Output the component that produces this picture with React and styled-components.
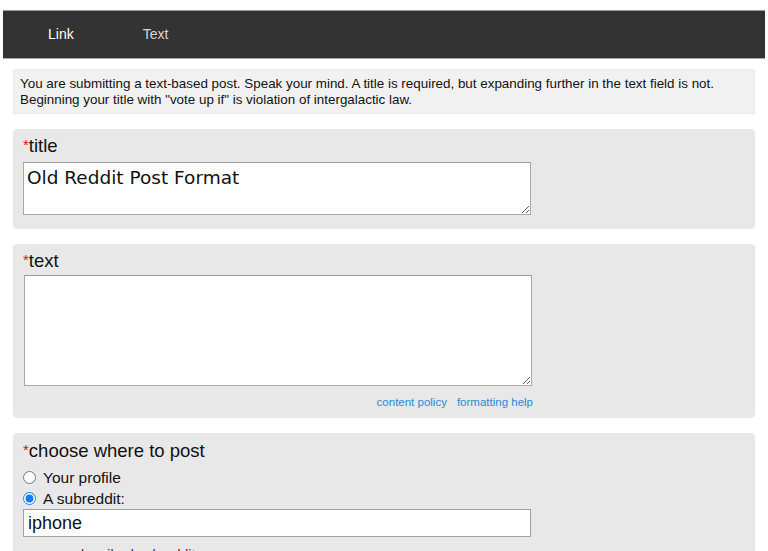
import React from "react";
import styled, { createGlobalStyle } from "styled-components";

const Global = createGlobalStyle`
  html, body { margin: 0; padding: 0; background: #fff; }
  body { font-family: "Liberation Sans", Arial, sans-serif; color: #222; overflow: hidden; }
`;

const Page = styled.div`
  padding: 10px 3px 0 3px;
  width: 762px;
`;

const TabBar = styled.nav`
  height: 47px;
  background: #333;
  border-top: 1px solid #9a9a9a;
  border-bottom: 1px solid #a8a8a8;
  display: flex;
  align-items: center;
  padding-left: 45px;
  gap: 69px;
`;

const Tab = styled.span`
  color: ${(p) => (p.$active ? "#fff" : "#d6d6d6")};
  font-size: 14px;
  padding-bottom: 1px;
`;

const Content = styled.div`
  margin-left: 10px;
  width: 742px;
  display: flex;
  flex-direction: column;
`;

const InfoBox = styled.div`
  margin-top: 10px;
  background: #f1f1f1;
  border: 1px solid #e9e9e9;
  padding: 6px 7px 5px 6px;
  font-size: 13.4px;
  line-height: 16px;
  color: #111;
`;

const Section = styled.section`
  margin-top: 15px;
  background: #e8e8e8;
  border-radius: 4px;
  padding: ${(p) => p.$pad || "6px 10px 14px 10px"};
  display: flex;
  flex-direction: column;
`;

const Label = styled.div`
  font-size: 18.5px;
  line-height: 20px;
  color: #111;
  margin-bottom: ${(p) => p.$mb || "6px"};
`;

const Star = styled.span`
  color: #f00;
  font-size: 15px;
  vertical-align: 2px;
`;

const TextArea = styled.textarea`
  box-sizing: border-box;
  width: ${(p) => p.$w || "508px"};
  height: ${(p) => p.$h};
  margin-left: ${(p) => p.$ml || "0"};
  border: 1px solid #a9a9a9;
  border-top-color: #9a9a9a;
  background: #fff;
  padding: 4px 4px 2px 3px;
  font-family: ${(p) => (p.$verdana ? '"DejaVu Sans", Verdana, sans-serif' : '"Liberation Sans", Arial, sans-serif')};
  font-size: 18.5px;
  color: #111;
  outline: none;
  resize: vertical;
  display: block;
`;

const LinkRow = styled.div`
  width: 509px;
  display: flex;
  justify-content: flex-end;
  gap: 10px;
  margin-top: 10px;
  padding-left: 1px;
`;

const SmallLink = styled.a`
  color: #2b8ad1;
  font-size: 11.5px;
  text-decoration: none;
`;

const RadioRow = styled.label`
  display: flex;
  align-items: center;
  gap: 7px;
  height: 21px;
  font-size: 15.5px;
  color: #111;
`;

const Radio = styled.input`
  width: 13px;
  height: 13px;
  margin: 0;
  accent-color: #1a7cf5;
`;

const SrInput = styled.input`
  box-sizing: border-box;
  width: 508px;
  height: 28px;
  margin-top: 0;
  border: 1px solid #a0a0a0;
  padding: 0 4px;
  font-family: "Liberation Sans", Arial, sans-serif;
  font-size: 18px;
  color: #111;
  outline: none;
`;

const SubNote = styled.div`
  margin: 10px 0 0 12px;
  font-size: 14px;
  color: #333;
`;

export default function App() {
  return (
    <>
      <Global />
      <Page>
        <TabBar>
          <Tab $active>Link</Tab>
          <Tab>Text</Tab>
        </TabBar>
        <Content>
          <InfoBox>
            You are submitting a text-based post. Speak your mind. A title is required, but expanding further in the text field is not.
            <br />
            Beginning your title with "vote up if" is violation of intergalactic law.
          </InfoBox>

          <Section>
            <Label>
              <Star>*</Star>title
            </Label>
            <TextArea $h="53px" $verdana defaultValue="Old Reddit Post Format" />
          </Section>

          <Section $pad="6px 10px 10px 10px">
            <Label $mb="4px">
              <Star>*</Star>text
            </Label>
            <TextArea $h="111px" $ml="1px" />
            <LinkRow>
              <SmallLink href="#">content policy</SmallLink>
              <SmallLink href="#">formatting help</SmallLink>
            </LinkRow>
          </Section>

          <Section $pad="7px 10px 14px 10px">
            <Label $mb="6px">
              <Star>*</Star>choose where to post
            </Label>
            <RadioRow>
              <Radio type="radio" name="where" />
              Your profile
            </RadioRow>
            <RadioRow>
              <Radio type="radio" name="where" defaultChecked />
              A subreddit:
            </RadioRow>
            <SrInput defaultValue="iphone" />
            <SubNote>your subscribed subreddits</SubNote>
          </Section>
        </Content>
      </Page>
    </>
  );
}
